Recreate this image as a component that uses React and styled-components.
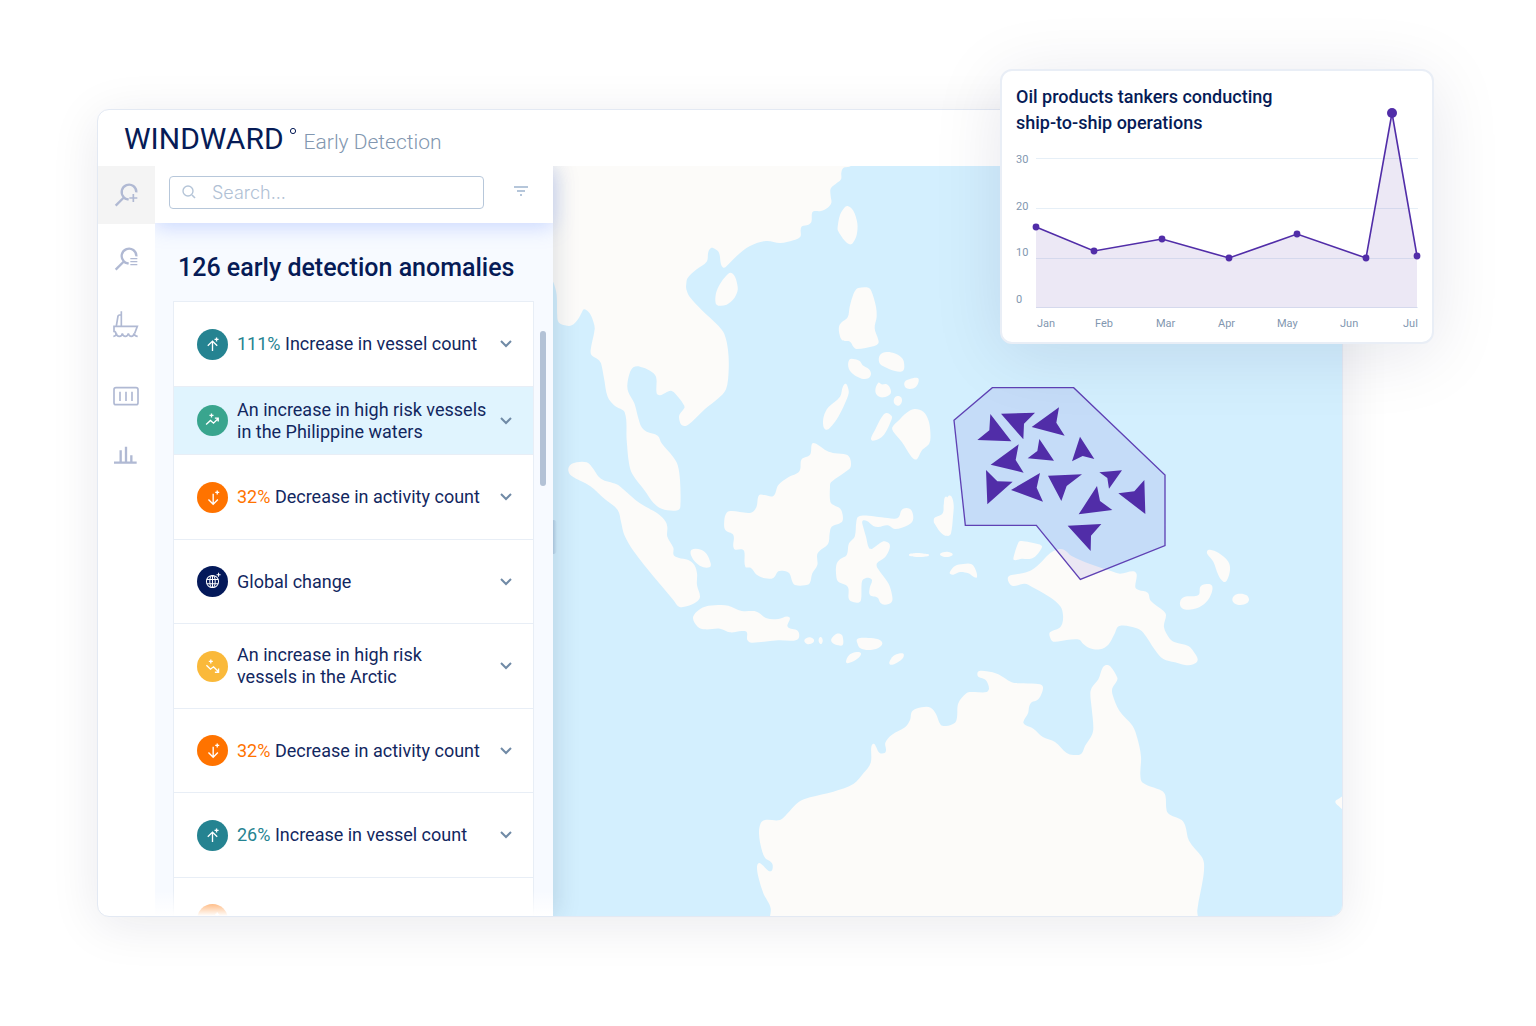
import React from "react";
import styled, { createGlobalStyle } from "styled-components";

const c = {
  navy: "#061b56",
  text: "#12275f",
  muted: "#8297b0",
  rail: "#b0b9d3",
  line: "#e8eef6",
  panel: "#f7faff",
  water: "#d3effe",
  land: "#fcfbf9",
  purple: "#512da8",
  teal: "#258391",
  green: "#39a58e",
  orange: "#ff7300",
  amber: "#fab93a",
};

const Global = createGlobalStyle`
  *, *::before, *::after { box-sizing: border-box; }
  body {
    margin: 0;
    background: #fff;
    font-family: Roboto, "Noto Sans", sans-serif;
    color: ${c.text};
  }
  button { font: inherit; color: inherit; border: 0; background: none; padding: 0; cursor: pointer; }
`;

const Stage = styled.main`
  position: relative;
  display: flex;
  height: 100vh;
  min-height: 640px;
  padding: 109px 193px 109px 97px;
`;

const AppWindow = styled.section`
  flex: 1;
  min-width: 0;
  display: flex;
  flex-direction: column;
  overflow: hidden;
  background: #fff;
  border: 1px solid #e3e9f3;
  border-radius: 12px;
  box-shadow: 0 8px 50px rgba(20, 20, 50, 0.09);
`;

const Header = styled.header`
  flex: none;
  display: flex;
  align-items: baseline;
  gap: 7px;
  height: 56px;
  padding: 11px 26px 0;
`;

const Logo = styled.span`
  display: flex;
  align-items: flex-start;
  gap: 5px;
  font-size: 30px;
  line-height: 36px;
  font-weight: 400;
  color: ${c.navy};
`;

const LogoRing = styled.svg`
  width: 8px;
  height: 8px;
  margin-top: 6px;
  fill: none;
  stroke: ${c.navy};
`;

const Product = styled.span`
  font-size: 21px;
  line-height: 24px;
  font-weight: 300;
  color: ${c.muted};
`;

const Body = styled.div`
  flex: 1;
  min-height: 0;
  display: flex;
`;

const Rail = styled.nav`
  flex: none;
  display: flex;
  flex-direction: column;
  width: 57px;
`;

const RailButton = styled.button`
  display: grid;
  place-items: center;
  height: ${(p) => p.$height}px;
  background: ${(p) => (p.$active ? "#f4f4f4" : "transparent")};

  svg {
    width: 28px;
    height: 28px;
    fill: none;
    stroke: ${c.rail};
    stroke-width: 5;
  }
`;

const Panel = styled.aside`
  position: relative;
  z-index: 1;
  flex: none;
  display: flex;
  flex-direction: column;
  width: 398px;
  background: ${c.panel};
  box-shadow: 2px 0 24px rgba(20, 40, 70, 0.15);
  clip-path: inset(0 -40px 0 0);
`;

const PanelGrip = styled.span`
  position: absolute;
  left: 100%;
  top: 354px;
  width: 4px;
  height: 34px;
  background: linear-gradient(90deg, rgba(60, 80, 130, 0.2), rgba(60, 80, 130, 0));
  border-radius: 0 4px 4px 0;
`;

const SearchBar = styled.div`
  position: relative;
  flex: none;
  display: flex;
  align-items: center;
  justify-content: space-between;
  height: 57px;
  padding: 0 24px 5px 14px;
  background: #fff;
  box-shadow: 0 4px 20px rgba(130, 160, 255, 0.38);
`;

const SearchField = styled.label`
  display: flex;
  align-items: center;
  gap: 16px;
  width: 315px;
  height: 33px;
  padding: 0 12px;
  border: 1px solid #b7c7da;
  border-radius: 4px;

  svg {
    flex: none;
    width: 14px;
    height: 14px;
    fill: none;
    stroke: #b5c5d8;
  }
`;

const SearchInput = styled.input`
  flex: 1;
  min-width: 0;
  border: 0;
  outline: 0;
  padding: 2px 0 0;
  background: none;
  font: 300 18px/24px Inter, Roboto, sans-serif;
  color: ${c.text};

  &::placeholder { color: #b0c1d5; opacity: 1; }
`;

const FilterButton = styled.button`
  display: grid;
  place-items: center;
  width: 16px;
  height: 24px;

  svg {
    width: 16px;
    height: 12px;
    stroke: #b5c6da;
    stroke-width: 2;
  }
`;

const PanelTitle = styled.h1`
  margin: 0;
  padding: 29px 23px 18px;
  font-size: 25px;
  line-height: 31px;
  font-weight: 500;
  color: ${c.navy};
`;

const ListArea = styled.div`
  position: relative;
  flex: 1;
  min-height: 0;
  display: flex;
  gap: 6px;
  padding: 0 7px 0 18px;
  overflow: hidden;

  &::after {
    content: "";
    position: absolute;
    inset: auto 0 0 0;
    height: 26px;
    background: linear-gradient(rgba(255, 255, 255, 0), #fff);
  }
`;

const List = styled.ul`
  flex: 1;
  align-self: flex-start;
  margin: 0;
  padding: 0;
  list-style: none;
  background: #fff;
  border: 1px solid ${c.line};
`;

const ScrollThumb = styled.div`
  flex: none;
  width: 6px;
  height: 155px;
  margin-top: 30px;
  border-radius: 3px;
  background: #b3c2d6;
`;

const RowButton = styled.button`
  display: grid;
  grid-template-columns: 31px 1fr 12px;
  align-items: center;
  gap: 9px;
  width: 100%;
  min-height: ${(p) => p.$height}px;
  padding: 0 21px 0 23px;
  text-align: left;
  border-bottom: 1px solid ${c.line};
  background: ${(p) => (p.$selected ? "#e0f4fe" : "#fff")};
`;

const Badge = styled.span`
  display: block;
  width: 31px;
  height: 31px;
  border-radius: 50%;
  background: ${(p) => p.$tone};

  svg {
    display: block;
    width: 31px;
    height: 31px;
    fill: none;
    stroke: #fff;
    stroke-width: 4;
  }
`;

const RowText = styled.span`
  font-size: 18px;
  line-height: 22px;
  white-space: pre-line;
`;

const Percent = styled.span`
  color: ${(p) => p.$tone};
`;

const Chevron = styled.svg`
  width: 12px;
  height: 8px;
  fill: none;
  stroke: #708aa6;
  stroke-width: 2;
`;

const MapArea = styled.div`
  flex: 1;
  min-width: 0;
  background: ${c.water};

  svg { display: block; width: 100%; height: 100%; }
`;

const ChartCard = styled.section`
  position: absolute;
  top: 69px;
  right: 102px;
  width: 434px;
  padding: 13px 14px 8px;
  background: #fff;
  border: 2px solid #e9eef6;
  border-radius: 12px;
  box-shadow: 0 10px 70px rgba(10, 20, 70, 0.1);
`;

const ChartTitle = styled.h2`
  margin: 0;
  width: 280px;
  font-size: 18px;
  line-height: 26px;
  font-weight: 500;
  color: ${c.navy};
`;

const ChartSvg = styled.svg`
  display: block;
  overflow: visible;
  width: 402px;
  height: 198px;

  text {
    font: 400 11px Roboto, sans-serif;
    fill: ${c.muted};
  }
`;

/* Closed smooth curve through a list of "x,y" points. */
function smooth(text) {
  const pts = text.trim().split(/\s+/).map((p) => p.split(",").map(Number));
  const n = pts.length;
  const at = (i) => pts[(i + n) % n];
  const dir = (i) => {
    const dx = at(i + 1)[0] - at(i - 1)[0];
    const dy = at(i + 1)[1] - at(i - 1)[1];
    const len = Math.hypot(dx, dy) || 1;
    return [dx / len, dy / len];
  };
  let d = `M${pts[0].join(" ")}`;
  for (let i = 0; i < n; i++) {
    const a = at(i);
    const b = at(i + 1);
    const k = Math.hypot(b[0] - a[0], b[1] - a[1]) / 3;
    const u = dir(i);
    const v = dir(i + 1);
    d += `C${(a[0] + u[0] * k).toFixed(1)} ${(a[1] + u[1] * k).toFixed(1)} ${(b[0] - v[0] * k).toFixed(1)} ${(b[1] - v[1] * k).toFixed(1)} ${b[0]} ${b[1]}`;
  }
  return d + "Z";
}

const regions = [
  {
    name: "mainland-and-philippines",
    x: 0,
    y: 0,
    land: [
      "-60,-60 960,-60 918,17 895,24 889,38 888,58 872,72 857,86 857,108 859,128 848,143 828,153 806,154 801,160 799,186 790,194 771,199 767,210 766,230 745,241 706,249 663,243 615,258 575,288 542,321 535,323 528,313 522,278 510,267 498,264 490,276 485,305 455,328 428,354 424,370 424,388 435,412 470,450 520,497 538,522 549,570 551,630 543,688 520,715 480,747 440,786 424,797 411,796 404,784 403,765 418,744 417,736 400,712 380,693 362,698 345,706 335,700 333,650 315,632 285,620 265,622 254,640 247,675 250,696 268,730 280,775 290,802 305,815 338,827 350,850 384,890 398,915 405,960 406,1040 400,1050 385,1052 350,1046 325,1028 300,993 262,942 252,910 245,840 239,757 210,738 188,710 177,655 168,610 160,599 140,586 137,570 149,508 146,488 134,460 118,448 110,458 100,476 80,496 60,496 42,488 37,475 35,405 28,375 22,365 -60,340",
      "908,138 925,152 937,190 935,225 924,248 914,253 900,243 879,212 878,200 885,165 898,143",
      "557,338 570,350 578,380 577,395 565,418 545,434 520,437 512,430 513,400 525,372 543,348",
      "940,384 970,383 979,393 993,440 995,470 989,505 1000,540 1000,550 988,558 935,567 925,560 915,545 892,541 884,525 882,500 890,487 908,472 914,440 925,403 932,390",
      "1005,585 1025,576 1048,580 1070,593 1077,608 1074,632 1050,633 1018,620 1003,608",
      "913,599 930,598 945,604 953,616 972,628 978,642 970,655 950,656 925,643 911,625",
      "1000,668 1010,673 1025,673 1036,686 1036,702 1015,712 999,708 991,692",
      "1079,666 1095,657 1118,654 1121,664 1113,680 1095,687 1081,682",
      "1058,708 1068,712 1071,723 1065,735 1058,737 1049,732 1046,722 1050,712",
      "901,671 908,680 911,700 900,730 880,770 855,803 843,809 835,798 836,770 850,742 885,710 893,682",
      "1024,759 1040,768 1040,778 1020,820 1005,835 982,842 978,835 990,810 1010,772",
      "1108,747 1135,755 1150,780 1156,815 1153,850 1130,872 1117,896 1108,898 1096,886 1070,845 1045,815 1042,802 1060,782 1085,758",
    ],
  },
  {
    name: "sunda",
    x: 0,
    y: 780,
    land: [
      "75,136 95,127 125,127 140,140 168,176 215,193 240,212 285,250 340,282 362,305 367,322 367,350 385,383 386,405 400,413 430,420 448,435 456,460 456,495 465,530 455,545 425,559 402,560 385,540 330,475 265,392 238,345 228,305 218,270 180,238 135,198 80,168 70,152",
      "440,389 468,389 485,402 497,430 495,441 475,442 455,430 439,408",
      "805,69 818,74 845,92 870,100 905,104 915,115 918,135 912,148 858,187 855,200 856,245 866,255 886,266 893,285 892,304 880,312 860,320 854,340 849,372 818,400 817,435 802,460 794,490 780,496 750,495 742,485 733,460 718,453 700,454 685,474 660,475 635,464 618,444 601,440 598,395 590,388 567,386 565,345 541,330 538,300 545,278 560,273 618,278 634,262 642,226 658,225 685,228 700,195 730,172 763,154 770,118 795,104 800,74",
      "940,290 970,287 1010,292 1050,296 1062,290 1070,270 1085,264 1100,272 1104,300 1090,315 1050,327 1028,316 1000,321 985,318 966,303 953,302 953,315 963,350 972,384 982,386 1015,364 1032,370 1034,385 1020,412 996,430 998,445 1030,490 1041,525 1040,546 1020,554 1006,548 998,533 975,525 974,505 981,480 970,473 955,478 950,490 948,540 940,548 918,544 911,535 908,500 880,485 874,470 874,435 885,418 905,405 912,370 929,350 934,305",
      "444,595 455,575 480,560 520,555 550,557 590,573 635,575 665,595 700,597 733,592 728,620 758,632 761,655 745,662 700,661 620,668 607,660 605,636 590,633 555,637 525,626 480,628 458,620",
      "1202,230 1208,240 1208,300 1205,345 1185,335 1168,305 1168,294 1195,280 1197,245",
      "1092,405 1107,400 1122,399 1138,401 1152,405 1138,410 1122,411 1107,410",
      "778,662 785,654 795,652 806,658 806,666 795,672 785,671",
      "827,651 832,656 833,664 830,671 825,671 821,664 822,655",
      "859,657 875,641 890,644 894,655 893,675 880,676 862,668",
      "937,657 970,654 1000,658 1012,670 1000,684 970,690 945,684 938,672",
      "904,720 915,703 935,696 948,700 940,714 918,727 905,729",
      "1033,727 1045,708 1065,700 1076,702 1072,716 1050,731 1036,734",
    ],
  },
  {
    name: "sulawesi-east",
    x: 1185,
    y: 630,
    land: [
      "26,377 35,380 41,405 39,440 33,490 25,498 12,492 -17,460 -17,448 8,430 12,400",
      "0,553 10,547 25,546 38,553 28,560 10,560",
      "30,605 45,588 70,582 95,583 107,600 111,622 103,622 85,610 60,606 40,614 30,611",
      "236,516 245,513 280,519 305,527 303,538 285,560 268,567 245,566 222,570 221,560",
    ],
  },
  {
    name: "new-guinea",
    x: 1365,
    y: 1140,
    land: [
      "24,112 35,105 70,99 95,90 125,65 150,40 175,28 192,29 215,48 270,72 335,94 360,101 400,94 410,103 406,142 416,150 443,158 452,182 490,212 498,225 492,262 510,297 525,307 565,318 583,338 593,360 580,373 555,375 525,367 490,357 465,330 430,278 410,265 358,258 343,283 325,314 300,328 270,325 250,312 238,299 200,300 160,305 150,292 150,277 178,264 187,250 189,225 182,200 150,172 95,140 74,131 40,138 27,128",
      "622,32 630,29 655,38 685,65 690,90 680,122 670,125 655,105 640,65 622,42",
      "601,140 615,133 635,136 635,158 618,187 590,205 560,209 542,200 542,180 555,170 595,165",
      "697,179 705,165 722,161 740,166 747,179 740,190 722,195 705,191",
      "1006,785 1015,777 1040,768 1040,812 1015,797",
    ],
  },
  {
    name: "australia",
    x: 585,
    y: 1440,
    land: [
      "712,103 716,94 740,94 775,103 815,127 850,130 900,133 909,142 903,165 892,180 875,187 868,198 864,220 850,246 856,255 880,266 910,292 945,306 980,339 1000,345 1024,341 1035,318 1056,284 1060,262 1055,205 1051,160 1056,142 1075,118 1088,83 1099,75 1112,80 1132,113 1130,124 1117,145 1118,165 1138,212 1178,258 1192,295 1203,350 1201,405 1208,428 1265,452 1276,466 1280,512 1290,524 1325,540 1336,558 1347,602 1385,650 1392,670 1390,710 1372,810 1371,880 92,880 92,805 70,760 56,715 51,680 58,669 85,692 95,692 98,675 92,665 76,655 64,625 57,580 62,550 75,540 120,540 140,523 175,487 210,472 280,455 340,432 370,400 392,368 394,320 401,311 408,320 418,338 434,339 438,330 436,308 455,285 495,262 510,240 517,213 545,202 572,203 588,222 602,254 618,258 645,248 651,232 655,190 680,159 700,156 740,156 747,145 737,120 716,111",
    ],
  },
];

const vessels = [
  "151,132 214,214 112,210 148,181",
  "183,131 285,128 252,161 250,208",
  "357,112 275,171 374,197 349,158",
  "298,207 342,272 263,265 292,243",
  "420,200 463,267 428,258 396,274",
  "236,223 152,284 251,308 227,270",
  "138,300 172,334 218,335 142,403",
  "300,309 213,360 309,395 290,353",
  "324,317 426,313 380,348 364,393",
  "478,307 546,301 507,356 502,324",
  "613,330 616,432 535,370 583,364",
  "471,348 480,393 517,420 416,433",
  "383,467 484,462 453,497 452,543",
];

const WorldMap = () => (
  <svg viewBox="24 18 2367 2250" preserveAspectRatio="xMinYMin slice" role="img" aria-label="Map of Southeast Asia and Australia">
    {regions.map((r) => (
      <g key={r.name} transform={`translate(${r.x} ${r.y})`} fill={c.land}>
        {r.land.map((pts) => (
          <path key={pts} d={smooth(pts)} />
        ))}
      </g>
    ))}
    <g transform="translate(1185 630)" fill={c.purple}>
      <polygon
        points="42,151 157,53 401,53 675,315 675,527 421,628 289,466 76,466"
        fill="#4f3ec4"
        fillOpacity="0.1"
        stroke="#5f41b4"
        strokeWidth="4"
      />
      {vessels.map((pts) => (
        <polygon key={pts} points={pts} />
      ))}
    </g>
  </svg>
);

const railItems = [
  {
    label: "New search",
    height: 58,
    active: true,
    icon: (
      <svg viewBox="69 63 84 84">
        <path d="M139 97A22 22 0 1 0 101 111L106 116 116 119" strokeWidth="7" />
        <path d="M77 137L103 111" strokeWidth="7" />
        <path d="M130 102V126M118 114H142" />
      </svg>
    ),
  },
  {
    label: "Saved searches",
    height: 70,
    icon: (
      <svg viewBox="69 255 84 84">
        <path d="M139 289A22 22 0 1 0 101 303L106 308 116 311" strokeWidth="7" />
        <path d="M77 329L103 303" strokeWidth="7" />
        <path d="M121 296H142M121 305H142M121 314H142" strokeWidth="4" />
      </svg>
    ),
  },
  {
    label: "Vessels",
    height: 62,
    icon: (
      <svg viewBox="70 452 84 84">
        <path d="M95 453V497M80 497L85 467Q86 464 89 464H95" />
        <path d="M135 519L143 498H73V513Q79 513 79 521" />
        <path d="M71 528Q80 528 80 519Q81 528 89 528Q97 528 98 519Q100 528 107 528Q114 528 116 519Q118 528 125 528Q132 528 133 519Q135 528 144 528" />
      </svg>
    ),
  },
  {
    label: "Containers",
    height: 80,
    icon: (
      <svg viewBox="68 666 84 84">
        <rect x="71" y="683" width="72" height="51" rx="6" />
        <path d="M89 695V723M107 695V723M125 695V723" />
      </svg>
    ),
  },
  {
    label: "Reports",
    height: 38,
    icon: (
      <svg viewBox="70 844 84 84">
        <path d="M73 909H141M93 872V909M109 861V909M125 887V909" strokeWidth="7" />
      </svg>
    ),
  },
];

const glyphs = {
  up: <path d="M0 19V-9M-14 4L0 -10 14 4M12 -21V-9M6 -15H18" />,
  down: <path d="M2 -11V19M-12 6L2 20 16 6M14 -21V-9M8 -15H20" />,
  trendUp: <path d="M-19 12L-6 0 3 8 16 -5M7 -7H17V3M-3 -21V-9M-9 -15H3" />,
  trendDown: <path d="M-18 -4L-6 8 3 1 17 15M7 17H18V6M-5 -21V-9M-11 -15H1" />,
  globe: (
    <g strokeWidth="3">
      <circle r="18" />
      <ellipse rx="8" ry="18" />
      <path d="M0 -18V18M-17 -6H17M-17 7H17M18 -26V-14M12 -20H24" />
    </g>
  ),
};

const anomalies = [
  { icon: "up", tone: c.teal, percent: "111%", text: "Increase in vessel count", height: 85 },
  { icon: "trendUp", tone: c.green, text: "An increase in high risk vessels\nin the Philippine waters", selected: true, height: 68 },
  { icon: "down", tone: c.orange, percent: "32%", text: "Decrease in activity count", height: 85 },
  { icon: "globe", tone: "#04195a", text: "Global change", height: 84 },
  { icon: "trendDown", tone: c.amber, text: "An increase in high risk\nvessels in the Arctic", height: 85 },
  { icon: "down", tone: c.orange, percent: "32%", text: "Decrease in activity count", height: 84 },
  { icon: "up", tone: c.teal, percent: "26%", text: "Increase in vessel count", height: 85 },
  { icon: "down", tone: c.orange, height: 84 },
];

const AnomalyRow = ({ icon, tone, percent, text, selected, height }) => (
  <li>
    <RowButton type="button" $selected={selected} $height={height} aria-label={text ? undefined : "More anomalies"}>
      <Badge $tone={tone}>
        <svg viewBox="-46 -46 92 92" aria-hidden="true">{glyphs[icon]}</svg>
      </Badge>
      <RowText>
        {percent && <Percent $tone={tone}>{percent} </Percent>}
        {text}
      </RowText>
      {text && (
        <Chevron viewBox="0 0 12 8" aria-hidden="true">
          <path d="M1 1L6 6 11 1" />
        </Chevron>
      )}
    </RowButton>
  </li>
);

/* Chart drawing units are pixels; the peak rises above the drawing's top edge. */
const series = [
  [20, 107], [78, 131], [146, 119], [213, 138], [281, 114], [350, 138], [376, -7], [401, 136],
];
const gridLines = [38, 88, 138, 187];
const yLabels = [["30", 43], ["20", 90], ["10", 136], ["0", 183]];
const xLabels = [["Jan", 21], ["Feb", 79], ["Mar", 140], ["Apr", 202], ["May", 261], ["Jun", 324], ["Jul", 387]];

const Chart = () => {
  const line = series.map((p) => p.join(",")).join(" ");
  return (
    <ChartSvg viewBox="0 16 402 198" role="img" aria-label="Operations per month, January to July">
      {gridLines.map((y) => (
        <path key={y} d={`M20 ${y}.5H402`} stroke="#e6eff7" />
      ))}
      <polygon points={`20,188 ${line} 401,188`} fill={c.purple} fillOpacity="0.11" />
      <polyline points={line} fill="none" stroke={c.purple} strokeWidth="1.6" />
      {series.map(([x, y]) => (
        <circle key={x} cx={x} cy={y} r={y < 0 ? 5 : 3.4} fill={c.purple} />
      ))}
      {yLabels.map(([t, y]) => (
        <text key={t} x="0" y={y}>{t}</text>
      ))}
      {xLabels.map(([t, x]) => (
        <text key={t} x={x} y="207">{t}</text>
      ))}
    </ChartSvg>
  );
};

export default function App() {
  return (
    <>
      <Global />
      <Stage>
        <AppWindow>
          <Header>
            <Logo>
              WINDWARD
              <LogoRing viewBox="0 0 8 8" aria-hidden="true">
                <circle cx="4" cy="4" r="2.6" />
              </LogoRing>
            </Logo>
            <Product>Early Detection</Product>
          </Header>
          <Body>
            <Rail aria-label="Main">
              {railItems.map((item) => (
                <RailButton key={item.label} type="button" aria-label={item.label} $height={item.height} $active={item.active}>
                  {item.icon}
                </RailButton>
              ))}
            </Rail>
            <Panel>
              <SearchBar>
                <SearchField>
                  <svg viewBox="0 0 14 14" aria-hidden="true">
                    <circle cx="6" cy="6" r="5" strokeWidth="1.4" />
                    <path d="M10 10L13 13" strokeWidth="1.6" />
                  </svg>
                  <SearchInput type="text" placeholder="Search..." aria-label="Search" />
                </SearchField>
                <FilterButton type="button" aria-label="Filter">
                  <svg viewBox="0 1 16 12" aria-hidden="true">
                    <path d="M1 2H15M4 6H12M7 10H9" />
                  </svg>
                </FilterButton>
              </SearchBar>
              <PanelTitle>126 early detection anomalies</PanelTitle>
              <ListArea>
                <List>
                  {anomalies.map((a, i) => (
                    <AnomalyRow key={i} {...a} />
                  ))}
                </List>
                <ScrollThumb />
              </ListArea>
              <PanelGrip />
            </Panel>
            <MapArea>
              <WorldMap />
            </MapArea>
          </Body>
        </AppWindow>
        <ChartCard>
          <ChartTitle>Oil products tankers conducting ship-to-ship operations</ChartTitle>
          <Chart />
        </ChartCard>
      </Stage>
    </>
  );
}
